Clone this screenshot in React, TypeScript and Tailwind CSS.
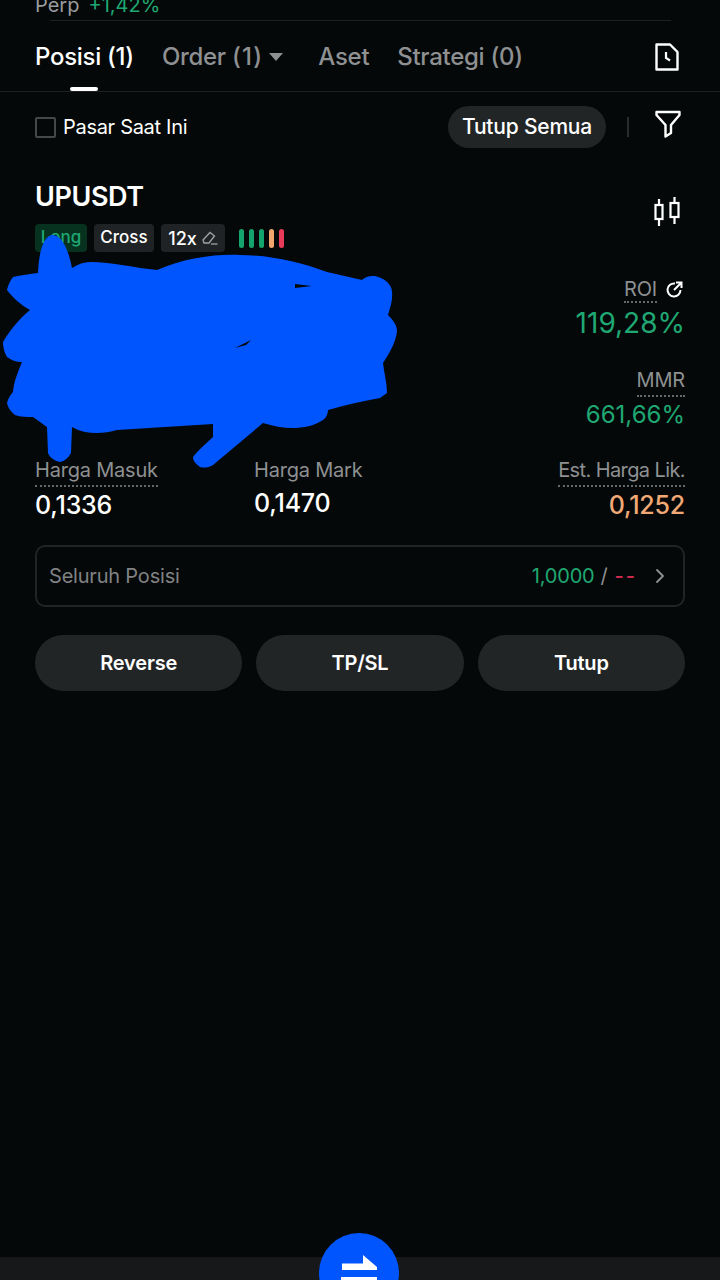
import { ChevronRight } from "lucide-react";

const inter = { fontFamily: "Inter, sans-serif" };

function Dotted({ children }: { children: React.ReactNode }) {
  return <span className="block w-fit border-b-2 border-dotted border-[#66686a] pb-[3px] leading-[24px]">{children}</span>;
}

function Scribble() {
  return (
    <svg className="absolute left-0 top-[230px]" width="400" height="240" viewBox="0 230 400 240">
      <path
        fill="#0055ff"
        d="M38 273 C39 250 44 235 53 235 C63 236 69 252 72 268 C78 264 84 262 90 262 C112 262 135 268 157 270 C185 258 215 254 240 255 C270 255 300 262 327 272 L362 280 C366 276 371 276 375 276 C384 278 392 284 392 292 C393 300 390 308 388 315 C393 320 397 325 397 331 C396 342 390 352 383 363 C384 373 387 383 387 393 L380 398 C363 401 345 405 328 410 C328 414 326 418 323 420 C314 426 303 428 293 428 C283 428 273 426 263 423 L213 465 C208 468 204 468 200 467 C196 464 193 461 193 457 C198 450 206 444 213 437 L213 424 L117 430 C107 433 96 434 85 432 C80 431 76 429 72 427 L71 453 C68 458 65 461 60 462 C55 461 50 458 48 453 L47 427 C42 424 38 420 33 417 C27 417 21 417 15 415 C11 412 8 408 7 403 C8 399 10 395 13 392 C14 381 18 372 22 362 C16 362 11 360 7 357 C4 352 3 347 3 342 C10 330 19 319 30 310 C21 305 13 298 7 290 C8 285 10 281 13 277 C21 275 30 274 38 273 Z"
      />
      <path fill="#050808" d="M295 284 L312 286 L295 288 Z M235 348 L251 340 L246 345 Z" />
    </svg>
  );
}

function FabIcon() {
  return (
    <svg width="40" height="40" viewBox="0 0 40 40" fill="white">
      <path d="M3 9.5 H24 V1 L38 13 V16 H3 Z" />
      <path d="M2 23 H38 V30 H2 Z" />
    </svg>
  );
}

export default function App() {
  return (
    <div className="relative h-[1280px] w-[720px] overflow-hidden bg-[#050808] flex flex-col text-white" style={inter}>
      {/* clipped row from the card above */}
      <div className="h-[20px] px-[35px] overflow-hidden flex gap-[9px] items-end text-[20px] leading-[24px]">
        <span className="text-[#9a9c9e] mb-[3px]">Perp</span>
        <span className="text-[#1fa873] mb-[3px]">+1,42%</span>
      </div>
      <div className="ml-[50px] mr-[49px] h-[1px] bg-[#1e2122]" />

      {/* tabs */}
      <div className="relative h-[71px] pt-[2px] border-b border-[#1e2122] pl-[35px] flex items-center text-[24px] tracking-[-0.3px] font-medium text-[#8e9092]">
        <span className="text-white">Posisi (1)</span>
        <span className="ml-[28px]">Order <span className="tracking-[1.2px]">(1)</span></span>
        <span className="ml-[6px] w-0 h-0 border-x-[7px] border-x-transparent border-t-[8px] border-t-[#8e9092]" />
        <span className="ml-[35px]">Aset</span>
        <span className="ml-[28px]">Strategi (0)</span>
        <svg className="ml-auto mr-[41px]" width="24" height="28" viewBox="0 0 24 28" fill="none" stroke="white" strokeWidth="2.4">
          <path d="M1.5 1.5 H15 L22.5 9 V26.5 H1.5 Z" strokeLinejoin="round" />
          <path d="M11 9 V15 L15 17.5" strokeWidth="2.2" />
        </svg>
        <span className="absolute left-[70px] bottom-0 w-[28px] h-[4px] rounded-sm bg-white" />
      </div>

      {/* filter row */}
      <div className="mt-[14px] h-[42px] pl-[35px] pr-[39px] flex items-center">
        <span className="w-[21px] h-[21px] rounded-[2px] border-2 border-[#45484b]" />
        <span className="ml-[7px] text-[20px] tracking-[-0.3px]">Pasar Saat Ini</span>
        <span className="ml-auto w-[158px] h-[42px] rounded-full bg-[#222526] flex items-center justify-center text-[21px] tracking-[-0.2px] font-medium">
          Tutup Semua
        </span>
        <span className="ml-[21px] w-[2px] h-[20px] bg-[#2a2d2f]" />
        <svg className="ml-[26px] mt-[-6px]" width="26" height="28" viewBox="0 0 26 28" fill="none" stroke="white" strokeWidth="2.4" strokeLinejoin="round">
          <path d="M1.5 2 H24.5 V5 L16 15 V23 L10.5 26.5 V15 L1.5 5 Z" />
        </svg>
      </div>

      {/* symbol */}
      <div className="mt-[30px] pl-[35px] pr-[38px] flex items-start justify-between">
        <div>
          <div className="text-[27px] leading-[38px] font-semibold tracking-[-0.4px]">UPUSDT</div>
          <div className="mt-[8px] flex items-center h-[28px] text-[17px]">
            <span className="h-[28px] w-[52px] rounded-[4px] bg-[#07321f] text-[#1fa873] font-medium flex items-center justify-center">Long</span>
            <span className="ml-[7px] h-[28px] w-[60px] rounded-[4px] bg-[#202325] font-medium flex items-center justify-center">Cross</span>
            <span className="ml-[7px] h-[28px] w-[64px] rounded-[4px] bg-[#202325] text-[18px] font-medium flex items-center justify-center gap-[5px]">
              12x
              <svg width="16" height="14" viewBox="0 0 16 14" fill="none" stroke="#a0a2a4" strokeWidth="1.3">
                <path d="M1 9 L8 1.5 L12.5 5 L7 12 H2 Z" />
                <path d="M9 13 H15.5" />
              </svg>
            </span>
            <span className="ml-[14px] flex gap-[5px]">
              <span className="w-[5px] h-[19px] rounded-full bg-[#14a56e]" />
              <span className="w-[5px] h-[19px] rounded-full bg-[#14a56e]" />
              <span className="w-[5px] h-[19px] rounded-full bg-[#14a56e]" />
              <span className="w-[5px] h-[19px] rounded-full bg-[#f0a66c]" />
              <span className="w-[5px] h-[19px] rounded-full bg-[#ea3a5a]" />
            </span>
          </div>
        </div>
        <svg className="mt-[19px]" width="28" height="30" viewBox="0 0 28 30" fill="none" stroke="white" strokeWidth="2.2">
          <rect x="1.5" y="8" width="7" height="14" />
          <path d="M5 2 V8 M5 22 V29" />
          <rect x="16.5" y="6" width="8" height="14" />
          <path d="M20.5 0 V6 M20.5 20 V27" />
        </svg>
      </div>

      {/* ROI / MMR */}
      <div className="mt-[26px] pr-[35px] flex flex-col items-end text-[20px] text-[#8e9092]">
        <div className="flex items-start h-[27px] tracking-[-0.2px]">
          <span className="border-b-2 border-dotted border-[#66686a] leading-[23px]">ROI</span>
          <svg className="ml-[9px] mt-[3px] mr-[2px]" width="17" height="17" viewBox="0 0 17 17" fill="none" stroke="white" strokeWidth="2">
            <path d="M9 2.5 A6.5 6.5 0 1 0 14.5 9" />
            <path d="M8 9 L15 2 M10 1.5 H15.5 V7" />
          </svg>
        </div>
        <div className="h-[36px] text-[28px] leading-[36px] text-[#1fa873]">119,28%</div>
        <div className="mt-[27px] tracking-[-0.2px]"><Dotted>MMR</Dotted></div>
        <div className="h-[36px] text-[24px] leading-[36px] text-[#1fa873]">661,66%</div>
      </div>

      {/* prices */}
      <div className="mt-[25px] px-[35px] grid grid-cols-[219px_1fr_auto] text-[20px] text-[#8e9092] tracking-[-0.2px]">
        <div>
          <Dotted>Harga Masuk</Dotted>
          <div className="mt-[1px] text-[25px] leading-[34px] font-medium text-white">0,1336</div>
        </div>
        <div>
          <div className="leading-[24px]">Harga Mark</div>
          <div className="mt-[4px] text-[25px] leading-[34px] font-medium text-white">0,1470</div>
        </div>
        <div className="flex flex-col items-end">
          <span className="tracking-[-0.6px]"><Dotted>Est. Harga Lik.</Dotted></span>
          <div className="mt-[1px] text-[25px] leading-[34px] font-medium text-[#f0a875]">0,1252</div>
        </div>
      </div>

      {/* close amount */}
      <div className="mt-[23px] mx-[35px] h-[62px] rounded-[10px] border-2 border-[#212425] pl-[12px] pr-[11px] flex items-center text-[20px] tracking-[-0.2px]">
        <span className="text-[#808284]">Seluruh Posisi</span>
        <span className="ml-auto text-[#1fa873]">1,0000</span>
        <span className="ml-[6px] text-[#8e9092]">/</span>
        <span className="ml-[7px] text-[#d42c52] tracking-[2px] font-medium">--</span>
        <ChevronRight className="ml-[11px] text-[#8e9092]" size={24} strokeWidth={1.8} />
      </div>

      {/* actions */}
      <div className="mt-[28px] px-[35px] flex gap-[14px] text-[20px] font-semibold tracking-[-0.2px]">
        <button className="flex-1 h-[56px] rounded-full bg-[#222526]">Reverse</button>
        <button className="flex-1 h-[56px] rounded-full bg-[#222526]">TP/SL</button>
        <button className="flex-1 h-[56px] rounded-full bg-[#222526]">Tutup</button>
      </div>

      <div className="mt-auto h-[23px] bg-[#16181a]" />

      <Scribble />
      <div className="absolute left-[319px] top-[1233px] w-[80px] h-[80px] rounded-full bg-[#0055ff] flex justify-center pt-[21px]">
        <FabIcon />
      </div>
    </div>
  );
}
